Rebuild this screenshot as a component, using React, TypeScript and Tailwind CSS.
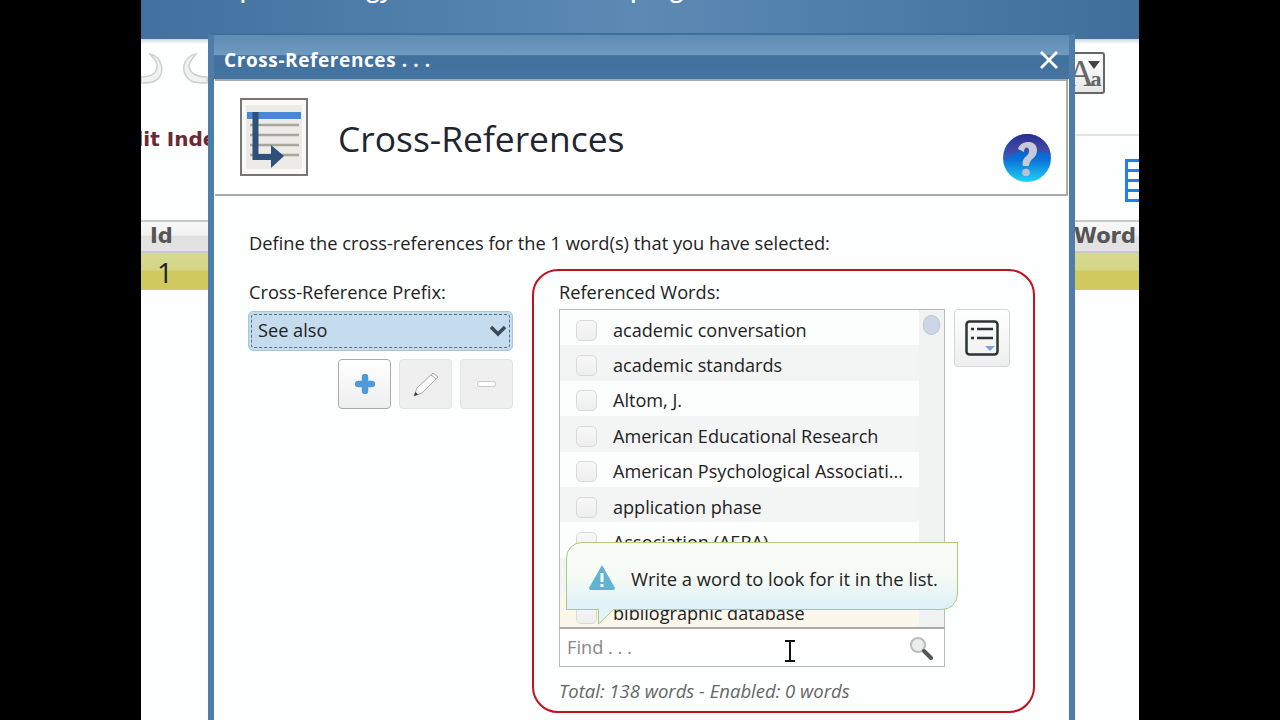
const font = "font-['Open_Sans','Noto_Sans',sans-serif]"

const words = [
  "academic conversation",
  "academic standards",
  "Altom, J.",
  "American Educational Research",
  "American Psychological Associati...",
  "application phase",
  "Association (AERA)",
  "Bias",
  "bibliographic database",
]

function WordRow({ label, index }: { label: string; index: number }) {
  const bg = index === 8 ? "bg-[#fbf7ea]" : index % 2 === 0 ? "bg-[#fcfdfd]" : "bg-[#f3f4f4]"
  return (
    <div className={`flex h-[35.4px] w-[359px] shrink-0 items-center pt-[5px] ${bg}`}>
      <span className="ml-[16px] h-[21px] w-[21px] shrink-0 rounded-[5px] border border-[#d9d9d9] bg-gradient-to-b from-[#f8f8f8] to-[#eeeeee]" />
      <span className="ml-[16px] truncate text-[18.1px] text-[#222]">{label}</span>
    </div>
  )
}

function CrossRefIcon() {
  return (
    <svg viewBox="0 0 68 78" className="h-[78px] w-[68px]">
      <rect x="1" y="1" width="66" height="76" fill="#f9f9f8" stroke="#777" strokeWidth="2" />
      <rect x="6" y="7" width="56" height="64" fill="#ecebe8" />
      <rect x="7" y="14" width="54" height="7" fill="#4a86dc" />
      <path d="M10 27H59M10 37H59M10 47H59M10 57H59" stroke="#a7a59c" strokeWidth="2.5" />
      <path d="M15.5 14V59H36" fill="none" stroke="#2f5179" strokeWidth="6" />
      <path d="M31 47L44 58L31 70Z" fill="#2f5179" />
    </svg>
  )
}

function HelpIcon() {
  return (
    <svg viewBox="0 0 48 48" className="h-[48px] w-[48px]">
      <defs>
        <linearGradient id="lens" x1="0" y1="0" x2="0" y2="1">
          <stop offset="0" stopColor="#0b3fb8" />
          <stop offset="0.55" stopColor="#0c74d8" />
          <stop offset="1" stopColor="#1fd4f6" />
        </linearGradient>
        <linearGradient id="cap" x1="0" y1="0" x2="0" y2="1">
          <stop offset="0" stopColor="#2a2f8e" />
          <stop offset="1" stopColor="#4d58b8" />
        </linearGradient>
      </defs>
      <circle cx="24" cy="24" r="24" fill="url(#lens)" />
      <path d="M1 26C1 11 11 0 24 0C37 0 47 10 47.5 21C36 15 12 15 1 26Z" fill="url(#cap)" />
      <path d="M15 15C17 6 34 5 34 16C34 25 26 24 26 32H20C18 22 27 23 26 16C25 12 21 13 21 18Z" fill="#c6c9d6" />
      <circle cx="23" cy="38.5" r="3.8" fill="#b9c2d4" />
    </svg>
  )
}

export default function App() {
  return (
    <div className={`${font} flex h-[720px] w-[1280px] justify-center overflow-hidden bg-black`}>
      <div className="relative h-[720px] w-[998px] bg-[#fdfefe]">
        <div className="h-[39px] overflow-hidden bg-gradient-to-r from-[#42719f] via-[#5c8ab5] to-[#3f6e9b] pl-[62px] text-[24px] font-semibold leading-none text-white">
          <div className="mt-[-24px] whitespace-nowrap">Step Technology for the whole index program</div>
        </div>
        <div className="h-[5px] bg-gradient-to-b from-[#cfd6dc] to-[#fdfefe]" />

        {/* page behind the dialog */}
        <div className="flex h-[176px] justify-between">
          <div className="w-[70px] overflow-hidden">
            <svg viewBox="0 0 67 36" className="mt-[9px] h-[36px] w-[67px]" fill="#f1f1f1" stroke="#cfcfcf" strokeWidth="1.5">
              <path d="M9 1C22 4 25 22 14 28C10 30 5 30 0 30V24C8 24 15 22 16 14C17 8 12 5 9 1Z" />
              <path d="M55 1C42 3 38 20 50 28C54 30 60 30 66 30V24C58 24 50 22 48 14C48 8 52 5 55 1Z" />
            </svg>
            <div className="ml-[-12px] mt-[36px] whitespace-nowrap font-['DejaVu_Sans',sans-serif] text-[20px] font-bold leading-[28px] text-[#6b2a33]">dit Index</div>
          </div>
          <div className="w-[64px]">
            <div className="h-[92px] border-b-2 border-[#e3e3e3] pt-[8px]">
              <div className="relative ml-[-10px] flex h-[42px] w-[40px] items-end overflow-hidden rounded-[3px] border-2 border-[#666] bg-gradient-to-b from-white to-[#e8e8e8] font-['Liberation_Serif',serif] leading-none text-[#666]">
                <span className="text-[38px] leading-[38px]">A</span>
                <span className="ml-[-4px] text-[22px] font-bold leading-[26px]">a</span>
                <svg viewBox="0 0 12 8" className="absolute right-[3px] top-[7px] h-[8px] w-[12px]"><path d="M0 0H12L6 8Z" fill="#444" /></svg>
              </div>
            </div>
            <div className="flex justify-end pt-[23px]">
              <svg viewBox="0 0 14 43" className="h-[43px] w-[14px]" fill="none" stroke="#2080e8" strokeWidth="3">
                <path d="M14 1.5H1.5V41.5H14M1.5 11.5H14M1.5 21.5H14M1.5 31.5H14" />
              </svg>
            </div>
          </div>
        </div>
        <div className="flex h-[33px] items-center justify-between border-y-2 border-[#c8c8c8] bg-[linear-gradient(180deg,#f7f7f7_0%,#f2f2f2_45%,#e1e1e1_50%,#e2e2e2_100%)] pl-[9px] pr-[3px] font-['DejaVu_Sans',sans-serif] text-[21px] font-bold text-[#555]">
          <span>Id</span>
          <span>Word</span>
        </div>
        <div className="h-[37px] bg-[linear-gradient(180deg,#d6da8f_0%,#d4d685_45%,#cfc95f_50%,#cfc95f_100%)] pl-[16px] text-[28px] leading-[38px] text-[#222]">1</div>

        {/* dialog */}
        <div className="absolute left-[67px] top-[33px] h-[700px] w-[867px] border-x-[6px] border-t-[2px] border-[#4f7da9] border-t-[#3f6f9d] bg-[#fdfefe]">
          <div className="relative h-[44px] bg-[linear-gradient(180deg,#5f8cb4_0%,#6f9abf_45%,#40709e_47%,#45749f_100%)]">
            <span className="absolute left-[10px] top-[16px] text-[19px] font-bold leading-none tracking-[0.6px] text-white">Cross-References . . .</span>
            <svg viewBox="0 0 20 20" className="absolute right-[10px] top-[15px] h-[20px] w-[20px]" stroke="white" strokeWidth="2.8"><path d="M2 2L18 18M18 2L2 18" /></svg>
          </div>
          <div className="mx-[1px] flex h-[117px] items-start border-y-2 border-r-2 border-[#aaa] bg-white">
            <div className="ml-[25px] mt-[17px]"><CrossRefIcon /></div>
            <h1 className="ml-[30px] mt-[33px] text-[35.4px] leading-[48px] text-[#1e2530]">Cross-References</h1>
            <div className="ml-auto mr-[15px] mt-[53px]"><HelpIcon /></div>
          </div>

          <div className="pl-[35px] pt-[34px] text-[18.2px] text-[#222]">
            <p className="text-[18.3px] leading-[26px]">Define the cross-references for the 1 word(s) that you have selected:</p>
            <div className="mt-[13px] flex items-start">
              <div className="w-[264px] shrink-0 pt-[10px]">
                <div className="leading-[26px]">Cross-Reference Prefix:</div>
                <div className="ml-[-1px] mt-[6px] rounded-[5px] border border-[#a9c4dc] bg-[#c5dcef] p-[2px]">
                  <div className="flex h-[34px] items-center justify-between rounded-[3px] border border-dashed border-[#5a6d7e] pl-[6px] pr-[3px]">
                    <span>See also</span>
                    <svg viewBox="0 0 16 12" className="h-[12px] w-[16px]" fill="none" stroke="#3c4a55" strokeWidth="3.5"><path d="M1 2L8 9L15 2" /></svg>
                  </div>
                </div>
                <div className="mt-[8px] flex justify-end gap-[8px]">
                  <div className="flex h-[50px] w-[53px] items-center justify-center rounded-[4px] border border-[#aaa] bg-gradient-to-b from-white to-[#eee]">
                    <svg viewBox="0 0 20 20" className="h-[20px] w-[20px]"><path d="M10 3V17M3 10H17" stroke="#4f9bd8" strokeWidth="6.5" strokeLinecap="round" /></svg>
                  </div>
                  <div className="flex h-[50px] w-[53px] items-center justify-center rounded-[4px] border border-[#e3e3e3] bg-[#efefef]">
                    <svg viewBox="0 0 28 28" className="h-[28px] w-[28px]"><path d="M2 26L5 18L21 3L26 7L10 23Z" fill="#fafafa" stroke="#aaa" /><path d="M19 5L24 9" stroke="#aaa" /><path d="M2 26L3.5 22L6 24.5Z" fill="#333" /></svg>
                  </div>
                  <div className="flex h-[50px] w-[53px] items-center justify-center rounded-[4px] border border-[#e3e3e3] bg-[#efefef]">
                    <span className="h-[6px] w-[19px] rounded-[2px] border border-[#ccc] bg-white" />
                  </div>
                </div>
              </div>

              <div className="ml-[19px] flex h-[444px] w-[503px] shrink-0 flex-col rounded-[26px] border-2 border-[#c0121f] pl-[25px]">
                <div className="pt-[8px] leading-[26px]">Referenced Words:</div>
                <div className="mt-[4px] flex items-start gap-[9px]">
                  <div className="w-[386px] shrink-0">
                    <div className="relative h-[318px] overflow-hidden border-x border-t border-[#bbb] bg-[#f1f2f2]">
                      <div className="flex flex-col">
                        {words.map((w, i) => <WordRow key={w} label={w} index={i} />)}
                      </div>
                      <span className="absolute left-[363px] top-[5px] h-[20px] w-[17px] rounded-full border border-[#bcc6d4] bg-[#ccd6e6]" />
                    </div>
                    <div className="flex h-[40px] items-center justify-between border border-t-2 border-[#bbb] border-t-[#aaa] bg-white pl-[7px] pr-[11px]">
                      <span className="text-[#888]">Find . . .</span>
                      <svg viewBox="0 0 24 24" className="h-[24px] w-[24px]" fill="none"><circle cx="9" cy="9" r="7" fill="#eceeee" stroke="#bbb" strokeWidth="2" /><path d="M15 15L22 22" stroke="#555" strokeWidth="4" strokeLinecap="round" /></svg>
                    </div>
                    <div className="mt-[12px] whitespace-nowrap text-[18.5px] italic leading-[24px] text-[#666]">Total: 138 words - Enabled: 0 words</div>
                  </div>
                  <div className="flex h-[58px] w-[56px] shrink-0 items-center justify-center rounded-[4px] border border-[#d5d5d5] bg-gradient-to-b from-white to-[#eee]">
                    <svg viewBox="0 0 34 36" className="h-[36px] w-[34px]" fill="none">
                      <rect x="1.5" y="1.5" width="31" height="33" rx="3" stroke="#2e3436" strokeWidth="2.5" />
                      <path d="M6 9H9M12 9H28M6 18H9M12 18H28" stroke="#2e3436" strokeWidth="2.5" />
                      <path d="M20 26H30L25 31Z" fill="#7ea6dc" />
                    </svg>
                  </div>
                </div>
              </div>
            </div>
          </div>

          {/* tooltip over the list */}
          <div className="absolute left-[352px] top-[507px] flex h-[68px] w-[392px] items-center rounded-br-[16px] rounded-tl-[16px] border border-[#a9cc7f] bg-gradient-to-b from-[#f9fcf6] via-[#f6faf5] to-[#ddf0f8]">
            <svg viewBox="0 0 28 26" className="ml-[21px] mt-[2px] h-[26px] w-[28px]"><path d="M14 1L27 24Q27 26 25 26H3Q1 26 1 24Z" fill="#5fb4d3" /><rect x="12.5" y="9" width="3" height="9" fill="#fff" /><rect x="12.5" y="20" width="3" height="3" fill="#fff" /></svg>
            <span className="ml-[15px] mt-[6px] whitespace-nowrap text-[18.4px] text-[#222]">Write a word to look for it in the list.</span>
            <svg viewBox="0 0 17 16" className="absolute left-[31px] top-[66px] h-[16px] w-[17px]"><path d="M0.5 0V15L16 0" fill="#e4f3f8" stroke="#a9cc7f" /><path d="M1 0H15" stroke="#e4f3f8" strokeWidth="2" /></svg>
          </div>
        </div>

        {/* mouse cursor */}
        <svg viewBox="0 0 14 22" className="absolute left-[642px] top-[640px] h-[22px] w-[14px]" fill="none" stroke="#111" strokeWidth="2"><path d="M2 1H12M2 21H12M7 1V21" /></svg>
      </div>
    </div>
  )
}
